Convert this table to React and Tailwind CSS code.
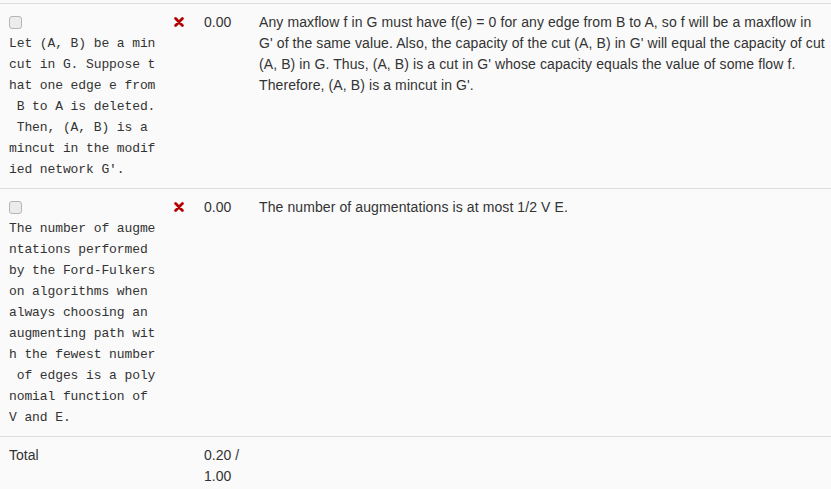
import React from "react";

const rows = [
  {
    question: [
      "Let (A, B) be a min",
      "cut in G. Suppose t",
      "hat one edge e from",
      " B to A is deleted.",
      " Then, (A, B) is a",
      "mincut in the modif",
      "ied network G'.",
    ],
    score: "0.00",
    feedback: [
      "Any maxflow f in G must have f(e) = 0 for any edge from B to A, so f will be a maxflow in",
      "G' of the same value. Also, the capacity of the cut (A, B) in G' will equal the capacity of cut",
      "(A, B) in G. Thus, (A, B) is a cut in G' whose capacity equals the value of some flow f.",
      "Therefore, (A, B) is a mincut in G'.",
    ],
  },
  {
    question: [
      "The number of augme",
      "ntations performed",
      "by the Ford-Fulkers",
      "on algorithms when",
      "always choosing an",
      "augmenting path wit",
      "h the fewest number",
      " of edges is a poly",
      "nomial function of",
      "V and E.",
    ],
    score: "0.00",
    feedback: ["The number of augmentations is at most 1/2 V E."],
  },
];

function Cross() {
  return (
    <svg width="10" height="10" viewBox="0 0 10 10" className="-mt-[1px]">
      <path d="M1.6 1.6 L8.4 8.4 M8.4 1.6 L1.6 8.4" stroke="#b30000" strokeWidth="2.8" strokeLinecap="round" />
    </svg>
  );
}

function Row({ question, score, feedback }) {
  return (
    <div className="flex border-t border-[#dddddd] py-2">
      {/* statement */}
      <div className="w-[167px] shrink-0 pl-[9px] pr-2">
        <div className="h-[21px] flex items-center">
          <input
            type="checkbox"
            className="appearance-none w-[13px] h-[13px] border border-[#b5b5b5] rounded-[3px] bg-[#ececec]"
          />
        </div>
        <div className="font-['Liberation_Mono',monospace] text-[13px] leading-[21px] text-[#333] tracking-[-0.1px] whitespace-pre">
          {question.map((l, i) => (
            <div key={i}>{l}</div>
          ))}
        </div>
      </div>

      {/* result icon */}
      <div className="w-[29px] shrink-0 pl-[7px]">
        <div className="h-[21px] flex items-center">
          <Cross />
        </div>
      </div>

      {/* score */}
      <div className="w-[55px] shrink-0 px-2 text-[14px] leading-[21px]">{score}</div>

      {/* feedback */}
      <div className="flex-1 pl-2 text-[14px] leading-[21px] tracking-[0.1px] whitespace-nowrap">
        {feedback.map((l, i) => (
          <div key={i}>{l}</div>
        ))}
      </div>
    </div>
  );
}

export default function App() {
  return (
    <div className="min-h-screen bg-[#fafafa] pt-[3px] font-['Liberation_Sans',Arial,sans-serif] text-[#333] overflow-hidden">
      {rows.map((r, i) => (
        <Row key={i} {...r} />
      ))}
      <div className="flex border-t border-[#dddddd] py-2 text-[14px] leading-[21px]">
        <div className="w-[196px] shrink-0 pl-[9px]">Total</div>
        <div className="w-[55px] shrink-0 px-2">0.20 / 1.00</div>
        <div className="flex-1"></div>
      </div>
    </div>
  );
}
